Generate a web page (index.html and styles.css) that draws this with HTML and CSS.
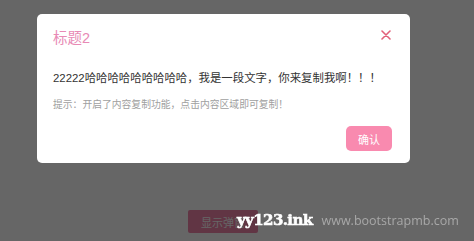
FILE: index.html
```html
<!DOCTYPE html>
<html lang="zh-CN">
<head>
<meta charset="utf-8">
<title>弹窗</title>
<link rel="stylesheet" href="styles.css">
</head>
<body>
<main class="page">
  <button class="show-btn" type="button">显示弹窗</button>
</main>

<div class="overlay">
  <div class="dialog" role="dialog">
    <div class="dialog-head">
      <h2 class="dialog-title">标题2</h2>
      <span class="dialog-close">
        <svg width="10" height="10" viewBox="0 0 10 10"><path d="M1 1 L9 9 M9 1 L1 9" stroke="#e2607a" stroke-width="1.6" stroke-linecap="round"/></svg>
      </span>
    </div>
    <p class="dialog-text">22222哈哈哈哈哈哈哈哈哈，我是一段文字，你来复制我啊！！！</p>
    <p class="dialog-hint">提示：开启了内容复制功能，点击内容区域即可复制！</p>
    <div class="dialog-foot">
      <button class="ok-btn" type="button">确认</button>
    </div>
  </div>
</div>

<div class="watermark">
  <span class="wm-brand">yy123.ink</span>
  <span class="wm-site">www.bootstrapmb.com</span>
</div>
</body>
</html>
```

FILE: styles.css
```css
html, body {
  margin: 0;
  padding: 0;
  background: #ffffff;
  font-family: "Liberation Sans", "Noto Sans CJK SC", sans-serif;
}

.page {
  height: 241px;
  box-sizing: border-box;
  padding: 210px 0 0 188px;
}

.show-btn {
  width: 70px;
  height: 23px;
  border: 0;
  border-radius: 2px;
  background: #f285ab;
  color: #ffffff;
  font-family: "Noto Sans CJK SC", sans-serif;
  font-size: 11px;
  padding: 0;
}

.overlay {
  position: fixed;
  inset: 0;
  background: rgba(0, 0, 0, 0.6);
  display: flex;
  align-items: flex-start;
  padding: 14px 0 0 37px;
}

.dialog {
  width: 373px;
  height: 149px;
  box-sizing: border-box;
  background: #ffffff;
  border-radius: 5px;
  padding: 0 18px 12px 16px;
  display: flex;
  flex-direction: column;
}

.dialog-head {
  display: flex;
  align-items: center;
  justify-content: space-between;
  height: 44px;
}

.dialog-title {
  margin: 0;
  font-family: "Liberation Sans", "Noto Sans CJK SC", sans-serif;
  font-weight: normal;
  font-size: 14.5px;
  color: #e88ab5;
}

.dialog-close {
  display: flex;
  width: 10px;
  height: 10px;
  margin-right: 1px;
  margin-top: -2px;
}

.dialog-text {
  margin: 13px 0 0;
  font-size: 11.4px;
  line-height: 14px;
  color: #333333;
}

.dialog-hint {
  margin: 14px 0 0;
  font-size: 9.8px;
  line-height: 12px;
  color: #a0a0a0;
}

.dialog-foot {
  margin-top: auto;
  display: flex;
  justify-content: flex-end;
}

.ok-btn {
  width: 46px;
  height: 25px;
  border: 0;
  border-radius: 5px;
  background: #f98aaf;
  color: #ffffff;
  font-family: "Noto Sans CJK SC", sans-serif;
  font-size: 11px;
  padding: 0;
}

.watermark {
  position: fixed;
  left: 237px;
  top: 211px;
  display: flex;
  align-items: baseline;
  gap: 9px;
}

.wm-brand {
  font-family: "DejaVu Serif", serif;
  font-weight: 900;
  font-size: 15px;
  letter-spacing: -0.6px;
  color: #ffffff;
  -webkit-text-stroke: 0.6px #ffffff;
  text-shadow: 0 0 1px #222;
}

.wm-site {
  font-family: "Open Sans", sans-serif;
  font-size: 12.5px;
  color: #a8a8a8;
}
```
